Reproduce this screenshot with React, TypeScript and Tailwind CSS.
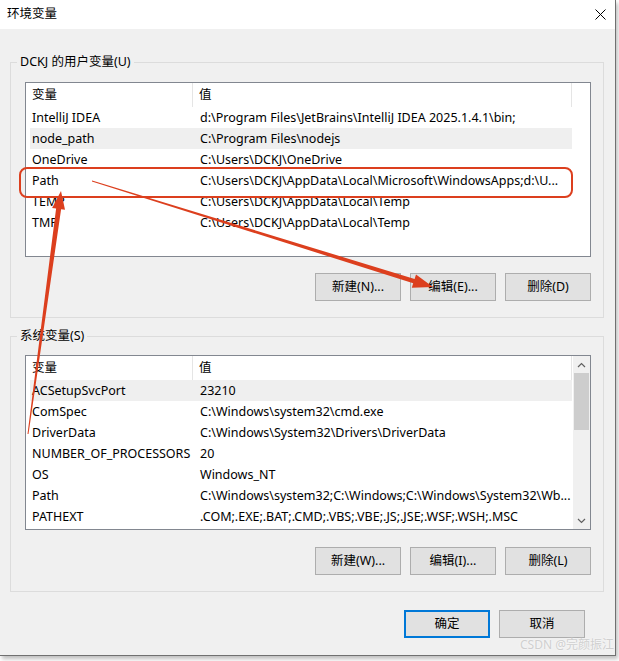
import React from "react";

const userVars: [string, string][] = [
  ["IntelliJ IDEA", "d:\\Program Files\\JetBrains\\IntelliJ IDEA 2025.1.4.1\\bin;"],
  ["node_path", "C:\\Program Files\\nodejs"],
  ["OneDrive", "C:\\Users\\DCKJ\\OneDrive"],
  ["Path", "C:\\Users\\DCKJ\\AppData\\Local\\Microsoft\\WindowsApps;d:\\U..."],
  ["TEMP", "C:\\Users\\DCKJ\\AppData\\Local\\Temp"],
  ["TMP", "C:\\Users\\DCKJ\\AppData\\Local\\Temp"],
];

const sysVars: [string, string][] = [
  ["ACSetupSvcPort", "23210"],
  ["ComSpec", "C:\\Windows\\system32\\cmd.exe"],
  ["DriverData", "C:\\Windows\\System32\\Drivers\\DriverData"],
  ["NUMBER_OF_PROCESSORS", "20"],
  ["OS", "Windows_NT"],
  ["Path", "C:\\Windows\\system32;C:\\Windows;C:\\Windows\\System32\\Wb..."],
  ["PATHEXT", ".COM;.EXE;.BAT;.CMD;.VBS;.VBE;.JS;.JSE;.WSF;.WSH;.MSC"],
];

// tapered arrow polygon, thin at start, wide at head
const arrow = (sx: number, sy: number, tx: number, ty: number, head: number, hw: number, w0: number, w1: number) => {
  const dx = tx - sx;
  const dy = ty - sy;
  const len = Math.hypot(dx, dy);
  const ux = dx / len;
  const uy = dy / len;
  const nx = -uy;
  const ny = ux;
  const bx = tx - ux * head;
  const by = ty - uy * head;
  const p = (x: number, y: number) => `${x.toFixed(1)},${y.toFixed(1)}`;
  return [
    p(sx + nx * w0, sy + ny * w0),
    p(bx + nx * w1, by + ny * w1),
    p(bx + nx * hw, by + ny * hw),
    p(tx, ty),
    p(bx - nx * hw, by - ny * hw),
    p(bx - nx * w1, by - ny * w1),
    p(sx - nx * w0, sy - ny * w0),
  ].join(" ");
};

const Btn = ({ label, primary }: { label: string; primary?: boolean }) => (
  <button
    className={
      primary
        ? "w-[86px] h-[28px] bg-[#e1e1e1] border-2 border-[#0078d7] text-black"
        : "w-[86px] h-[28px] bg-[#e1e1e1] border border-[#adadad] text-black"
    }
  >
    {label}
  </button>
);

const VarList = ({ rows, selected, scroll }: { rows: [string, string][]; selected: number; scroll?: boolean }) => (
  <div className="flex h-[175px] bg-white border border-[#828790]">
    <div className="flex-1 flex flex-col">
      <div className="flex h-[24px] items-center">
        <div className="w-[167px] h-full pl-[6px] flex items-center border-r border-[#e5e5e5]">变量</div>
        <div className="w-[379px] h-full pl-[6px] flex items-center border-r border-[#e5e5e5]">值</div>
      </div>
      <div className="flex flex-col pl-[4px]">
        {rows.map(([k, v], i) => (
          <div
            key={k + i}
            className={
              i === selected
                ? "flex w-[542px] h-[21px] items-center bg-[#efefef]"
                : "flex w-[542px] h-[21px] items-center"
            }
          >
            <div className="w-[163px] pl-[2px] pt-[1px] whitespace-nowrap overflow-hidden">{k}</div>
            <div className="flex-1 pl-[7px] pt-[1px] whitespace-nowrap">{v}</div>
          </div>
        ))}
      </div>
    </div>
    {scroll && (
      <div className="w-[17px] flex flex-col items-center bg-[#f0f0f0]">
        <div className="h-[17px] flex items-center justify-center">
          <svg width="9" height="6" viewBox="0 0 9 6">
            <path d="M1 5 L4.5 1.5 L8 5" fill="none" stroke="#606060" strokeWidth="1.2" />
          </svg>
        </div>
        <div className="w-[15px] h-[57px] bg-[#cdcdcd]" />
        <div className="flex-1" />
        <div className="h-[17px] flex items-center justify-center">
          <svg width="9" height="6" viewBox="0 0 9 6">
            <path d="M1 1 L4.5 4.5 L8 1" fill="none" stroke="#606060" strokeWidth="1.2" />
          </svg>
        </div>
      </div>
    )}
  </div>
);

export default function App() {
  return (
    <div className="relative w-[619px] h-[661px] bg-white text-[12.5px] text-black font-['Noto_Sans','Noto_Sans_CJK_SC',sans-serif]">
      <div className="w-[616px] h-[656px] flex flex-col bg-[#f0f0f0] border-r border-b border-[#707070] shadow-[2px_3px_4px_rgba(0,0,0,0.25)]">
        {/* title bar */}
        <div className="h-[29px] bg-white flex items-center justify-between pl-[7px] pr-[9px]">
          <span>环境变量</span>
          <svg width="11" height="11" viewBox="0 0 11 11">
            <path d="M0.5 0.5 L10.5 10.5 M10.5 0.5 L0.5 10.5" stroke="#000" strokeWidth="1" />
          </svg>
        </div>

        <div className="flex flex-col pl-[10px] pr-[11px]">
          <fieldset className="mt-[25px] border border-[#dcdcdc] pl-[14px] pr-[12px] pb-[16px]">
            <legend className="-ml-[8px] px-[3px] leading-[16px]">DCKJ 的用户变量(U)</legend>
            <div className="mt-[12px]">
              <VarList rows={userVars} selected={1} />
            </div>
            <div className="flex justify-end gap-[9px] mt-[16px]">
              <Btn label="新建(N)..." />
              <Btn label="编辑(E)..." />
              <Btn label="删除(D)" />
            </div>
          </fieldset>

          <fieldset className="mt-[10px] border border-[#dcdcdc] pl-[14px] pr-[12px] pb-[16px]">
            <legend className="-ml-[8px] px-[3px] leading-[16px]">系统变量(S)</legend>
            <div className="mt-[11px]">
              <VarList rows={sysVars} selected={0} scroll />
            </div>
            <div className="flex justify-end gap-[9px] mt-[17px]">
              <Btn label="新建(W)..." />
              <Btn label="编辑(I)..." />
              <Btn label="删除(L)" />
            </div>
          </fieldset>

          <div className="flex justify-end gap-[9px] mt-[18px] pr-[19px]">
            <Btn label="确定" primary />
            <Btn label="取消" />
          </div>
        </div>
      </div>

      {/* annotations */}
      <svg className="absolute inset-0 pointer-events-none" width="619" height="661" viewBox="0 0 619 661">
        <rect x="20" y="168" width="552" height="29" rx="7" fill="none" stroke="#dc3f1e" strokeWidth="2" />
        <polygon points={arrow(92, 181, 433, 287, 20, 7, 0.5, 2.2)} fill="#dc3f1e" />
        <polygon points={arrow(28, 434, 61, 191, 18, 6.5, 0.5, 2.5)} fill="#dc3f1e" />
      </svg>

      <div className="absolute right-[5px] bottom-[7px] text-[12px] text-[#cfcfcf] [text-shadow:0_0_2px_#fff]">
        CSDN @完颜振江
      </div>
    </div>
  );
}
